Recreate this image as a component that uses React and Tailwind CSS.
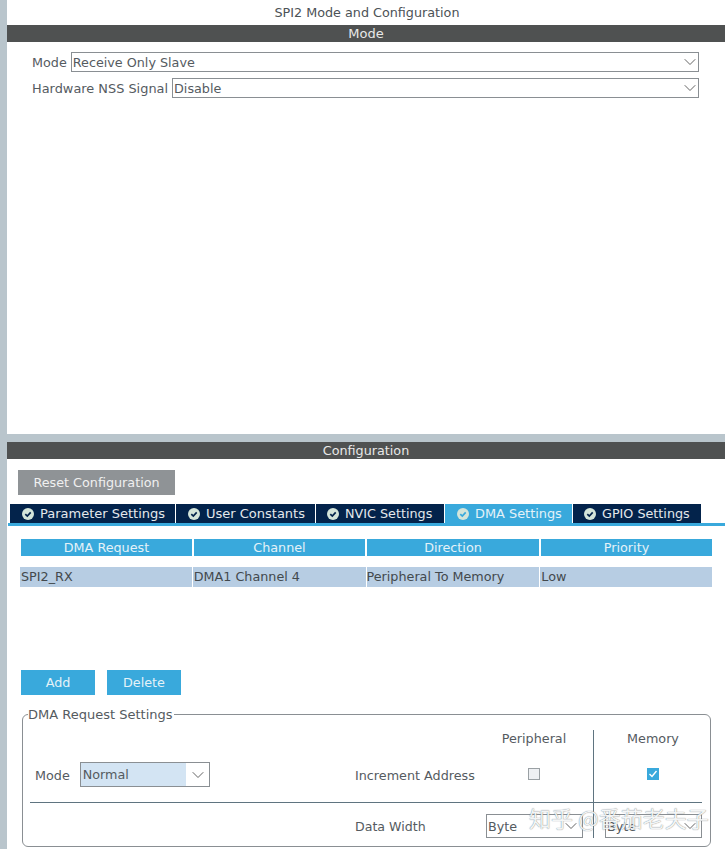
import React from "react";
import { ChevronDown } from "lucide-react";

function Check({ color }) {
  return (
    <svg width="12" height="12" viewBox="0 0 12 12" className="shrink-0">
      <circle cx="6" cy="6" r="6" fill="#d4e5da" />
      <path d="M3.3 6.1 L5.3 8 L8.7 4.4" fill="none" stroke={color} strokeWidth="1.7" />
    </svg>
  );
}

function Select({ value, className, chevron = "mr-[1px]" }) {
  return (
    <div className={"flex items-center justify-between border border-[#8a8f93] bg-white pl-[1px] " + className}>
      <span className="pt-[1px]">{value}</span>
      <ChevronDown size={20} strokeWidth={1.1} className={"text-[#555] " + chevron} />
    </div>
  );
}

const tabs = [
  { name: "Parameter Settings", w: "w-[165px] pl-[12px]", text: "text-[13px]" },
  { name: "User Constants", w: "w-[139px] pl-[12px]", text: "text-[13px]" },
  { name: "NVIC Settings", w: "w-[128px] pl-[11px]", text: "text-[12.75px]" },
  { name: "DMA Settings", w: "w-[127px] pl-[12px]", text: "text-[12.9px]", active: true },
  { name: "GPIO Settings", w: "w-[128px] pl-[11px]", text: "text-[12.75px]" },
];

const headers = [
  { name: "DMA Request", w: "w-[171px]" },
  { name: "Channel", w: "w-[171px]" },
  { name: "Direction", w: "w-[172px]" },
  { name: "Priority", w: "w-[171px]" },
];

const cells = [
  { name: "SPI2_RX", w: "w-[172px] pl-[1px]" },
  { name: "DMA1 Channel 4", w: "w-[173px] pl-[1px]" },
  { name: "Peripheral To Memory", w: "w-[173px]" },
  { name: "Low", w: "w-[172px] pl-[1px]" },
];

export default function App() {
  return (
    <div className="relative h-[849px] w-[725px] overflow-hidden bg-[#b9c5cc] pl-[7px] font-['DejaVu_Sans',sans-serif] text-[12.75px] text-[#555b5f]">
      {/* mode panel */}
      <div className="h-[434px] bg-white">
        <div className="flex h-[25px] items-center justify-center pt-[1px] pl-[2px] text-[#4c5256]">SPI2 Mode and Configuration</div>
        <div className="flex h-[17px] items-center justify-center bg-[#4f5151] text-[13px] text-[#e8e8e8]">Mode</div>
        <div className="mt-[10px] flex h-[20px] items-center pl-[25px] pr-[26px]">
          <span className="mr-[4px] pt-[1px]">Mode</span>
          <Select value="Receive Only Slave" className="h-[20px] flex-1" chevron="mr-[-2px]" />
        </div>
        <div className="mt-[6px] flex h-[20px] items-center pl-[25px] pr-[26px]">
          <span className="mr-[4px] pt-[1px] text-[12.9px]">Hardware NSS Signal</span>
          <Select value="Disable" className="h-[20px] flex-1" chevron="mr-[-2px]" />
        </div>
      </div>

      {/* configuration panel */}
      <div className="mt-[8px] h-[407px] bg-white">
        <div className="flex h-[17px] items-center justify-center bg-[#4f5151] text-[#e8e8e8]">Configuration</div>
        <button className="ml-[11px] mt-[11px] block h-[25px] w-[157px] bg-[#8f9396] text-[#f0f0f0]">Reset Configuration</button>

        <div className="ml-[1px] mt-[9px] flex h-[22px] gap-[1px] border-b-[3px] border-[#39a9dc] pl-[2px]">
          {tabs.map((t) => (
            <div
              key={t.name}
              className={"flex h-[19px] items-center gap-[6px] " + t.w + " " + t.text + " " + (t.active ? "bg-[#39a9dc] text-[#e4f2f8]" : "bg-[#03234b] text-[#e4e8ec]")}
            >
              <Check color={t.active ? "#39a9dc" : "#03234b"} />
              <span>{t.name}</span>
            </div>
          ))}
        </div>

        <div className="ml-[14px] mt-[13px] flex gap-[2px]">
          {headers.map((h) => (
            <div key={h.name} className={"flex h-[17px] items-center justify-center bg-[#39a9dc] text-[#e4f2f8] " + h.w}>{h.name}</div>
          ))}
        </div>
        <div className="ml-[13px] mt-[11px] flex h-[20px] w-[692px] gap-[1px] bg-white">
          {cells.map((c) => (
            <div key={c.name} className={"flex items-center bg-[#b7cde3] text-[#43494d] " + c.w}>{c.name}</div>
          ))}
        </div>

        <div className="ml-[14px] mt-[83px] flex gap-[12px]">
          <button className="h-[25px] w-[74px] bg-[#39a9dc] text-[#e4f2f8]">Add</button>
          <button className="h-[25px] w-[74px] bg-[#39a9dc] text-[#e4f2f8]">Delete</button>
        </div>

        {/* dma request settings */}
        <fieldset className="ml-[15px] mt-[10px] h-[142px] w-[689px] rounded-[6px] border border-[#8a8f93] pl-[7px] pr-[8px]">
          <legend className="ml-[-2px] pr-[1px] pt-[2px] text-[13px] leading-[16px]">DMA Request Settings</legend>
          <div className="mt-[7px] grid grid-cols-[325px_131px_108px_108px] grid-rows-[24px_49px_35px]">
            <div className="col-span-2"></div>
            <div className="flex items-start justify-center border-r border-[#5f7480] pr-[11px] leading-[17px]">Peripheral</div>
            <div className="flex items-start justify-center pl-[10px] leading-[17px]">Memory</div>

            <div className="flex items-start border-b border-[#5f7480] pt-[8px] pl-[5px]">
              <span className="mr-[10px] pt-[4px]">Mode</span>
              <div className="flex h-[25px] w-[130px] items-center justify-between border border-[#8a8f93]">
                <span className="flex h-full w-[105px] items-center bg-[#d3e4f3] pl-[2px]">Normal</span>
                <ChevronDown size={20} strokeWidth={1.1} className="mr-[1px] text-[#555]" />
              </div>
            </div>
            <div className="flex items-start border-b border-[#5f7480] pt-[12px]">Increment Address</div>
            <div className="flex items-start justify-center border-b border-r border-[#5f7480] pt-[14px] pr-[11px]">
              <div className="h-[12px] w-[12px] border border-[#9aa0a4] bg-[#eef0f3]"></div>
            </div>
            <div className="flex items-start justify-center border-b border-[#5f7480] pt-[14px] pl-[10px]">
              <div className="flex h-[12px] w-[12px] items-center justify-center bg-[#39a9dc]">
                <svg width="10" height="10" viewBox="0 0 10 10">
                  <path d="M1.5 5 L4 7.5 L8.5 2" fill="none" stroke="white" strokeWidth="1.4" />
                </svg>
              </div>
            </div>

            <div></div>
            <div className="flex items-start pt-[15px] text-[12.6px]">Data Width</div>
            <div className="border-r border-[#5f7480] pt-[11px] pr-[10px]">
              <Select value="Byte" className="h-[24px] w-[97px]" />
            </div>
            <div className="pl-[11px] pt-[11px]">
              <Select value="Byte" className="h-[24px] w-[97px]" />
            </div>
          </div>
        </fieldset>
      </div>

      {/* watermark */}
      <div className="absolute left-[529px] top-[803px] font-['Noto_Sans_CJK_SC',sans-serif] text-[22px] leading-[28px] text-[#f2f4f5] opacity-90 [text-shadow:0_0_1px_#4f5860]">
        知乎 @番茄老夫子
      </div>
    </div>
  );
}
